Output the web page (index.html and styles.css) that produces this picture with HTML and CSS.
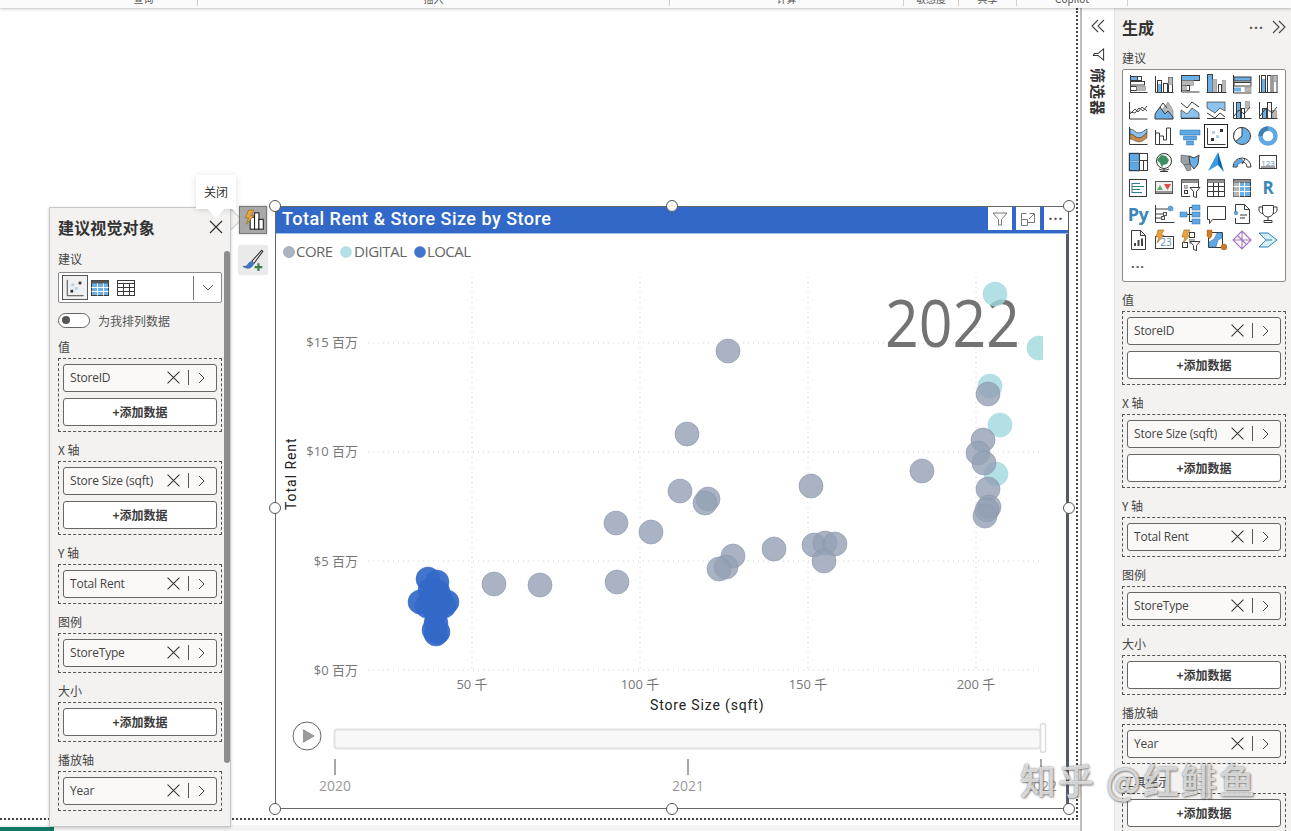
FILE: index.html
```html
<!DOCTYPE html>
<html lang="zh-CN">
<head>
<meta charset="utf-8">
<title>Power BI</title>
<link rel="stylesheet" href="styles.css">
</head>
<body>
<div class="app">
  <header class="ribbon">
    <span class="rib r1">查询</span><span class="rib r2">插入</span><span class="rib r3">计算</span><span class="rib r4">敏感度</span><span class="rib r5">共享</span><span class="rib r6">Copilot</span>
  </header>
  <div class="main">
    <section class="canvas">
      <div class="page"></div>
      <div class="tabs"><span class="tab"></span></div>

      <aside class="suggest">
        <div class="suggest-title"><h2>建议视觉对象</h2>
          <svg class="x-lg" viewBox="0 0 14 14"><path d="M1 1l12 12M13 1L1 13"/></svg>
        </div>
        <div class="lbl first">建议</div>
        <div class="picker">
          <span class="picked"><svg class="i s" viewBox="0 0 22 22"><path class="k" d="M2.5 2v17.500h18"/><rect class="d" x="15" y="4" width="3" height="3"/><rect class="d" x="6" y="13" width="3" height="3"/><rect class="lb" x="7" y="6" width="3" height="3"/><rect class="lb" x="11" y="10" width="3" height="3"/></svg></span>
          <svg class="i t1" viewBox="0 0 22 22"><rect class="bk" x="2.500" y="3.500" width="17" height="15"/><path class="h" d="M2.500 3.500h17v3h-17z"/><path class="wl" d="M2.500 10.500h17M2.500 14.500h17M8.500 6.500v12M14.500 6.500v12"/></svg>
          <svg class="i t2" viewBox="0 0 22 22"><rect class="k" x="2.500" y="3.500" width="17" height="15"/><path class="k" d="M2.500 6.500h17M2.500 10.500h17M2.500 14.500h17M8.500 6.500v12M14.500 6.500v12"/></svg>
          <span class="picker-end"><svg class="chev-d" viewBox="0 0 12 7"><path d="M1 1l5 5 5-5"/></svg></span>
        </div>
        <div class="toggle-row"><span class="toggle"><span class="knob"></span></span><span>为我排列数据</span></div>
        <div class="lbl">值</div>
        <div class="well"><div class="pill"><span class="nm">StoreID</span><svg class="x" viewBox="0 0 12 12"><path d="M.5.500l11 11M11.500.500l-11 11"/></svg><i class="bar"></i><svg class="gt" viewBox="0 0 7 12"><path d="M1 1l5 5-5 5"/></svg></div><div class="pill add">+添加数据</div></div>
        <div class="lbl">X 轴</div>
        <div class="well"><div class="pill"><span class="nm">Store Size (sqft)</span><svg class="x" viewBox="0 0 12 12"><path d="M.5.500l11 11M11.500.500l-11 11"/></svg><i class="bar"></i><svg class="gt" viewBox="0 0 7 12"><path d="M1 1l5 5-5 5"/></svg></div><div class="pill add">+添加数据</div></div>
        <div class="lbl">Y 轴</div>
        <div class="well"><div class="pill"><span class="nm">Total Rent</span><svg class="x" viewBox="0 0 12 12"><path d="M.5.500l11 11M11.500.500l-11 11"/></svg><i class="bar"></i><svg class="gt" viewBox="0 0 7 12"><path d="M1 1l5 5-5 5"/></svg></div></div>
        <div class="lbl">图例</div>
        <div class="well"><div class="pill"><span class="nm">StoreType</span><svg class="x" viewBox="0 0 12 12"><path d="M.5.500l11 11M11.500.500l-11 11"/></svg><i class="bar"></i><svg class="gt" viewBox="0 0 7 12"><path d="M1 1l5 5-5 5"/></svg></div></div>
        <div class="lbl">大小</div>
        <div class="well"><div class="pill add">+添加数据</div></div>
        <div class="lbl">播放轴</div>
        <div class="well"><div class="pill"><span class="nm">Year</span><svg class="x" viewBox="0 0 12 12"><path d="M.5.500l11 11M11.500.500l-11 11"/></svg><i class="bar"></i><svg class="gt" viewBox="0 0 7 12"><path d="M1 1l5 5-5 5"/></svg></div></div>
        <div class="scrollbar"></div>
      </aside>

      <span class="beak"></span>
      <div class="tooltip">关闭</div>
      <button class="side-btn on"><svg viewBox="0 0 22 22"><rect class="wd" x="7.500" y="7.500" width="4" height="11"/><rect class="wd" x="11.500" y="3.500" width="4" height="15"/><rect class="wd" x="15.500" y="9.500" width="4" height="9"/><path class="bolt" d="M6 1h5L8 6h3l-7 8 2-6H3z"/></svg></button>
      <button class="side-btn two"><svg viewBox="0 0 22 22"><path class="br" d="M2 17c3 0 4-1 5-3l3-2 2 2-2 3c-2 2-5 2-8 0z"/><path class="hd" d="M10 12L19 2l1 1-8 11"/><path class="pl" d="M16 14v7M12.500 17.500h7"/></svg></button>

      <article class="visual">
        <div class="vh"><span class="vt">Total Rent &amp; Store Size by Store</span>
          <span class="vb"><svg viewBox="0 0 16 16"><path d="M1 2h14l-5.500 6.500V14h-3V8.500z"/></svg></span>
          <span class="vb"><svg viewBox="0 0 16 16"><path d="M1.500 8.500V2.500h5M1.500 8.500h6v6h-6zM7.500 11.500h7v-5M9.500 2.500h5v4M14 3L9 8"/></svg></span>
          <span class="vb dots">···</span>
        </div>
        <svg class="plot" viewBox="276 234 790 574">
          <defs><clipPath id="cl"><rect x="276" y="234" width="767" height="450"/></clipPath></defs>
          <g class="lg">
            <circle class="cc" cx="289" cy="252" r="5.500"/><text x="296" y="257" textLength="37">CORE</text>
            <circle class="cd" cx="346" cy="252" r="5.500"/><text x="354" y="257" textLength="53">DIGITAL</text>
            <circle class="cl" cx="420" cy="252" r="5.500"/><text x="427" y="257" textLength="44">LOCAL</text>
          </g>
          <path class="grid" d="M368 343H1043M368 452H1043M368 561H1043M368 670H1043M472 277V670M640 277V670M808 277V670M976 277V670"/>
          <text class="big" x="885" y="347" textLength="135" lengthAdjust="spacingAndGlyphs">2022</text>
          <g class="ax">
            <text x="358" y="347">$15 百万</text><text x="358" y="456">$10 百万</text><text x="358" y="566">$5 百万</text><text x="358" y="675">$0 百万</text>
          </g>
          <g class="ax mid">
            <text x="472" y="689">50 千</text><text x="640" y="689">100 千</text><text x="808" y="689">150 千</text><text x="976" y="689">200 千</text>
          </g>
          <text class="axt" x="707" y="710" textLength="114">Store Size (sqft)</text>
          <text class="axt" transform="translate(296 474) rotate(-90)" textLength="72">Total Rent</text>
          <g clip-path="url(#cl)">
            <g class="cd">
              <circle cx="995" cy="294" r="12"/><circle cx="1039" cy="348" r="12"/><circle cx="990" cy="386" r="12"/><circle cx="1000" cy="425" r="12"/><circle cx="996" cy="474" r="12"/>
            </g>
            <g class="cc">
              <circle cx="728" cy="351" r="12"/><circle cx="687" cy="434" r="12"/><circle cx="680" cy="491" r="12"/><circle cx="708" cy="499" r="12"/><circle cx="705" cy="503" r="12"/><circle cx="616" cy="523" r="12"/><circle cx="651" cy="532" r="12"/><circle cx="811" cy="486" r="12"/><circle cx="922" cy="471" r="12"/><circle cx="733" cy="556" r="12"/><circle cx="774" cy="549" r="12"/><circle cx="814" cy="545" r="12"/><circle cx="825" cy="543" r="12"/><circle cx="835" cy="544" r="12"/><circle cx="824" cy="561" r="12"/><circle cx="726" cy="567" r="12"/><circle cx="719" cy="569" r="12"/><circle cx="617" cy="582" r="12"/><circle cx="540" cy="585" r="12"/><circle cx="494" cy="584" r="12"/><circle cx="983" cy="440" r="12"/><circle cx="978" cy="453" r="12"/><circle cx="984" cy="463" r="12"/><circle cx="988" cy="489" r="12"/><circle cx="989" cy="507" r="12"/><circle cx="987" cy="510" r="12"/><circle cx="985" cy="516" r="12"/><circle cx="988" cy="394" r="12"/>
            </g>
            <g class="cl">
              <circle cx="428" cy="579" r="12"/><circle cx="437" cy="582" r="12"/><circle cx="430" cy="590" r="12"/><circle cx="438" cy="592" r="12"/><circle cx="420" cy="602" r="12"/><circle cx="447" cy="602" r="12"/><circle cx="432" cy="600" r="12"/><circle cx="440" cy="598" r="12"/><circle cx="427" cy="606" r="12"/><circle cx="444" cy="606" r="12"/><circle cx="436" cy="612" r="12"/><circle cx="436" cy="623" r="12"/><circle cx="438" cy="632" r="12"/><circle cx="436" cy="634" r="12"/><circle cx="434" cy="630" r="12"/>
            </g>
          </g>
          <circle class="play" cx="307" cy="736" r="14"/><path class="tri" d="M303 729l12 7-12 7z"/>
          <rect class="track" x="334.500" y="729.500" width="706" height="19" rx="3"/>
          <rect class="thumb" x="1040.500" y="723.500" width="5" height="29" rx="2.500"/>
          <path class="tick" d="M335 759v16M688 759v16M1041 759v16"/>
          <g class="yr"><text x="335" y="791">2020</text><text x="688" y="791">2021</text><text x="1041" y="791">2022</text></g>
        </svg>
      </article>
      <span class="hd-p p1"></span><span class="hd-p p2"></span><span class="hd-p p3"></span><span class="hd-p p4"></span><span class="hd-p p5"></span><span class="hd-p p6"></span><span class="hd-p p7"></span><span class="hd-p p8"></span>
    </section>

    <aside class="filters">
      <svg class="dbl" viewBox="0 0 14 14"><path d="M7 1L1 7l6 6M13 1L7 7l6 6"/></svg>
      <svg class="fun" viewBox="0 0 14 14"><path d="M1 1.500h12L8 7.500v5l-2-1v-4z"/></svg>
      <div class="vtext">筛选器</div>
    </aside>

    <aside class="build">
      <div class="build-top"><h2>生成</h2><span class="more">···</span><svg class="dbl" viewBox="0 0 14 14"><path d="M1 1l6 6-6 6M7 1l6 6-6 6"/></svg></div>
      <div class="lbl sm">建议</div>
      <div class="gallery">
        <svg class="i" viewBox="0 0 22 22"><path class="k" d="M3.500 2v17.500h17"/><rect class="bk" x="3.500" y="3.500" width="7" height="4"/><rect class="k" x="10.500" y="3.500" width="4" height="4"/><rect class="k" x="3.500" y="8.500" width="14" height="3.500"/><rect class="k" x="3.500" y="13.500" width="6" height="4"/><rect class="gr" x="9.500" y="13.500" width="9" height="4"/></svg>
        <svg class="i" viewBox="0 0 22 22"><path class="k" d="M2.500 3v16.500h18"/><rect class="k" x="4.500" y="7.500" width="4" height="12"/><rect class="b" x="5" y="11" width="3" height="8"/><rect class="k" x="10.500" y="10.500" width="4" height="9"/><rect class="k" x="15.500" y="4.500" width="4" height="15"/><rect class="gr" x="15.500" y="4.500" width="4" height="7"/></svg>
        <svg class="i" viewBox="0 0 22 22"><rect class="bk" x="2.500" y="2.500" width="18" height="5"/><rect class="gr" x="2.500" y="7.500" width="12" height="5"/><rect class="k" x="2.500" y="12.500" width="8" height="5"/><rect class="gr" x="2.500" y="12.500" width="5" height="5"/><path class="k" d="M2.500 2v17h18"/></svg>
        <svg class="i" viewBox="0 0 22 22"><rect class="bk" x="2.500" y="1.500" width="5" height="18"/><rect class="gr" x="7.500" y="6.500" width="4" height="13"/><rect class="k" x="13.500" y="11.500" width="3" height="8"/><rect class="gr" x="17.500" y="7.500" width="3" height="12"/><path class="k" d="M1.500 19.500h20"/></svg>
        <svg class="i" viewBox="0 0 22 22"><path class="k" d="M2.500 2v18h18"/><rect class="b" x="3" y="4" width="17" height="4"/><rect class="k" x="3" y="4" width="17" height="4"/><rect class="k" x="3" y="9.500" width="17" height="3.500"/><rect class="b" x="3" y="14.500" width="7" height="4"/><rect class="gr" x="14" y="14.500" width="6" height="4"/></svg>
        <svg class="i" viewBox="0 0 22 22"><path class="k" d="M1.500 19.500h19M2.500 2v17"/><rect class="k" x="4.500" y="2.500" width="4" height="17"/><rect class="b" x="5" y="6" width="3" height="13"/><rect class="k" x="10.500" y="2.500" width="3.500" height="17"/><rect class="k" x="16" y="2.500" width="4" height="17"/><rect class="gr" x="16" y="2.500" width="4" height="6"/></svg>

        <svg class="i" viewBox="0 0 22 22"><path class="k" d="M2.500 3v17h18"/><path class="lk" d="M3 15l5-5 3 3 4-5 5 4M3 13l5 1 4-5 4 3 4-5"/></svg>
        <svg class="i" viewBox="0 0 22 22"><path class="gr" d="M9 11l6-8 5 8v9h-9z"/><path class="bk" d="M2 20v-5l5-7 5 7 3-3 5 6v2z"/><path class="k" d="M7 8l3-4 4 5"/></svg>
        <svg class="i" viewBox="0 0 22 22"><path class="bl" d="M2 11l6 4 5-6 7 5v5H2z"/><path class="k" d="M2 4l6 5 5-6 7 5"/><path class="k" d="M2 19.500h19"/></svg>
        <svg class="i" viewBox="0 0 22 22"><path class="bl" d="M2 3h18v9l-5-3-5 5-8-5z"/><path class="k" d="M2 14l8 5 5-5 5 4M2 19.500h18"/></svg>
        <svg class="i" viewBox="0 0 22 22"><rect class="bk" x="5.500" y="3.500" width="4" height="16"/><rect class="k" x="10.500" y="9.500" width="3" height="10"/><rect class="gr" x="14.500" y="2.500" width="4" height="7"/><path class="k" d="M2.500 3v16.500h18M3 17l5-6 5 4 6-7"/></svg>
        <svg class="i" viewBox="0 0 22 22"><rect class="bk" x="5.500" y="9.500" width="4" height="10"/><rect class="k" x="10.500" y="3.500" width="4" height="16"/><rect class="gr" x="15.500" y="11.500" width="4" height="8"/><path class="k" d="M2.500 3v16.500h18M3 17l6-8 6 5 5-6"/></svg>

        <svg class="i" viewBox="0 0 22 22"><path class="bl" d="M3 4c4 0 5 4 9 4s5-3 8-4v4c-3 1-4 5-8 5S7 9 3 9z"/><path class="or" d="M3 9c4 0 5 4 9 4s5-4 8-5v5c-3 1-4 4-8 4s-5-3-9-3z"/><path class="k" d="M2.500 2v17.500h18"/></svg>
        <svg class="i" viewBox="0 0 22 22"><path class="k" d="M2.500 5v14.500h18M2.500 8h4v11.500M6.500 19.500V11h4v4h3V3h4v16.500"/></svg>
        <svg class="i" viewBox="0 0 22 22"><path class="bn" d="M1 5h20v5H1z"/><path class="bn" d="M4.500 11h13v4h-13zM7.500 16h7v4h-7z"/></svg>
        <span class="sel"><svg class="i" viewBox="0 0 22 22"><path class="k" d="M2.500 3v16.500h18"/><rect class="d" x="15" y="4" width="3" height="3"/><rect class="d" x="6" y="13" width="3" height="3"/><rect class="lb" x="7" y="6" width="3" height="3"/><rect class="lb" x="11" y="10" width="3" height="3"/></svg></span>
        <svg class="i" viewBox="0 0 22 22"><circle class="bk" cx="11" cy="11" r="8.500"/><path class="wf" d="M11 11V2.500A8.500 8.500 0 0 0 4.500 16.500z"/></svg>
        <svg class="i" viewBox="0 0 22 22"><circle class="dn" cx="11" cy="11" r="7.500"/><path class="dn2" d="M11 3.500a7.500 7.500 0 0 0-7.500 7.500"/></svg>

        <svg class="i" viewBox="0 0 22 22"><rect class="bn" x="2" y="2" width="10" height="8"/><rect class="bn" x="2" y="11" width="10" height="9"/><rect class="k" x="2.500" y="2.500" width="18" height="17"/><path class="k" d="M12.500 2.500v17M12.500 9.500h8M16.500 9.500v10"/></svg>
        <svg class="i" viewBox="0 0 22 22"><circle class="gl" cx="11" cy="10" r="7.500"/><path class="gn" d="M8 4l5 1 3 4-2 4-4 1-1 3-2-5-3-3z"/><path class="k" d="M6 18c3 1.500 7 1.500 10 0M11 18v2M7 20.500h8"/></svg>
        <svg class="i" viewBox="0 0 22 22"><path class="gr2" d="M2 4l8 1 1 8-6 1-3-3z"/><path class="bk" d="M10 5l5 2 5-3-1 9-4 5-4-5z"/><path class="gr2" d="M5 14l6-1 1 6-4 1z"/></svg>
        <svg class="i" viewBox="0 0 22 22"><path class="ar1" d="M13 1L3 20l10-6z"/><path class="ar2" d="M13 1l6 20-6-7z"/></svg>
        <svg class="i" viewBox="0 0 22 22"><path class="k" d="M2 16a9 9 0 0 1 18 0h-4a5 5 0 0 0-10 0z"/><path class="bn" d="M3 15.500a8 8 0 0 1 8-7.500l1 3-1 1a4 4 0 0 0-5 3.500z"/><path class="lkd" d="M11 13l3-5"/></svg>
        <span class="card-i"><svg class="i" viewBox="0 0 22 22"><rect class="k" x="2.500" y="4.500" width="17" height="13"/><text class="n123" x="11" y="14.500">123</text><path class="k" d="M4 16h14"/></svg></span>

        <svg class="i" viewBox="0 0 22 22"><rect class="k" x="2.500" y="2.500" width="17" height="17"/><path class="tl" d="M5 6.500h8M5 9.500h12M5 12.500h8M5 15.500h10M5 6v10"/></svg>
        <svg class="i" viewBox="0 0 22 22"><rect class="kg" x="2.500" y="4.500" width="17" height="12"/><path class="tg" d="M4 13l3-5 3 5z"/><path class="tr" d="M11 7h7l-3.500 6z"/><path class="k" d="M3 15h16"/></svg>
        <svg class="i" viewBox="0 0 22 22"><path class="k" d="M11 19.500H2.500v-17h17v8"/><path class="gs" d="M2.500 2.500h17v3h-17z"/><rect class="gr" x="5.500" y="8.500" width="3" height="3"/><rect class="k" x="5.500" y="13.500" width="3" height="3"/><path class="w" d="M11 10.500h10l-3.500 4v6l-3-1v-5z"/></svg>
        <svg class="i" viewBox="0 0 22 22"><rect class="k" x="2.500" y="2.500" width="17" height="17"/><path class="gs" d="M2.500 2.500h17v3h-17z"/><path class="k" d="M2.500 9.500h17M2.500 14.500h17M8.500 5.500v14M13.500 5.500v14"/></svg>
        <svg class="i" viewBox="0 0 22 22"><rect class="bk" x="2.500" y="2.500" width="17" height="17"/><path class="gs" d="M2.500 2.500h17v3h-17z"/><rect class="gr" x="2.500" y="5.500" width="6" height="14"/><path class="wl" d="M2.500 9.500h17M2.500 14.500h17M8.500 5.500v14M13.500 5.500v14"/></svg>
        <span class="txt-i r">R</span>

        <span class="txt-i py">Py</span>
        <svg class="i" viewBox="0 0 22 22"><path class="k" d="M2.500 2v17.500h19M3 6h12M3 11h7M3 15h5"/><circle class="bn" cx="17.500" cy="5.500" r="2.500"/><rect class="kg" x="10.500" y="9.500" width="3" height="3"/><rect class="kg" x="8.500" y="13.500" width="3" height="3"/></svg>
        <svg class="i" viewBox="0 0 22 22"><rect class="bn" x="1" y="9" width="7" height="5"/><rect class="bn" x="13" y="2" width="8" height="5"/><rect class="bn" x="13" y="9" width="8" height="5"/><rect class="bn" x="13" y="16" width="8" height="5"/><path class="k" d="M8 11.500h5M10.500 4.500v14M10.500 4.500H13M10.500 18.500H13"/></svg>
        <svg class="i" viewBox="0 0 22 22"><path class="k" d="M2.500 3.500h18v13h-13l-3 4v-4h-2z"/></svg>
        <svg class="i" viewBox="0 0 22 22"><path class="k" d="M4.500 10V1.500h9l5 5v14h-14V15M13.500 1.500v5h5M9 12h7M9 15h5"/><circle class="bn" cx="5" cy="10" r="1.800"/></svg>
        <svg class="i" viewBox="0 0 22 22"><path class="k" d="M5.500 2.500h11v6a5.500 5.500 0 0 1-11 0zM5.500 4H2v3c0 2 2 3.500 4 3.500M16.500 4H20v3c0 2-2 3.500-4 3.500M11 14v3M7 19.500h8v-2H7z"/></svg>

        <svg class="i" viewBox="0 0 22 22"><path class="k" d="M4.500 1.500h9l5 5v14h-14zM13.500 1.500v5h5"/><path class="dk" d="M7 17h2v-3H7zM10.500 17h2v-6h-2zM14 17h2V9.500h-2z"/></svg>
        <svg class="i" viewBox="0 0 22 22"><rect class="k" x="2.500" y="7.500" width="18" height="12"/><text class="n123 big-n" x="13" y="17">23</text><path class="bolt" d="M5 1h6L8 6h3l-7 8 2-6H3z"/></svg>
        <svg class="i" viewBox="0 0 22 22"><rect class="k" x="10.500" y="3.500" width="5" height="5"/><rect class="k" x="3.500" y="13.500" width="5" height="5"/><rect class="gr" x="10.500" y="10.500" width="5" height="4"/><path class="w" d="M11 12.500h10l-3.500 4v5l-3-1v-4z"/><path class="bolt" d="M5 1h6L8 6h3l-7 8 2-6H3z"/></svg>
        <svg class="i" viewBox="0 0 22 22"><path class="k" d="M3.500 3.500h14v15h-14z"/><path class="bn" d="M4 18V13l5-3 3-6h5v5l-4 2-2 7z"/><path class="orf" d="M2 1h5v6L4.500 10 2 7z"/><circle class="orf" cx="19" cy="18" r="3"/></svg>
        <svg class="i" viewBox="0 0 22 22"><path class="pu" d="M11 2l9 9-9 9-9-9zM11 2v18M2 11h18M6.500 6.500l9 9"/></svg>
        <svg class="i" viewBox="0 0 22 22"><path class="pa" d="M2 4h9l9 7-9 7H2l7-7zM9 11h6"/></svg>

        <span class="gal-more">···</span>
      </div>
      <div class="lbl">值</div>
      <div class="well"><div class="pill"><span class="nm">StoreID</span><svg class="x" viewBox="0 0 12 12"><path d="M.5.500l11 11M11.500.500l-11 11"/></svg><i class="bar"></i><svg class="gt" viewBox="0 0 7 12"><path d="M1 1l5 5-5 5"/></svg></div><div class="pill add">+添加数据</div></div>
      <div class="lbl">X 轴</div>
      <div class="well"><div class="pill"><span class="nm">Store Size (sqft)</span><svg class="x" viewBox="0 0 12 12"><path d="M.5.500l11 11M11.500.500l-11 11"/></svg><i class="bar"></i><svg class="gt" viewBox="0 0 7 12"><path d="M1 1l5 5-5 5"/></svg></div><div class="pill add">+添加数据</div></div>
      <div class="lbl">Y 轴</div>
      <div class="well"><div class="pill"><span class="nm">Total Rent</span><svg class="x" viewBox="0 0 12 12"><path d="M.5.500l11 11M11.500.500l-11 11"/></svg><i class="bar"></i><svg class="gt" viewBox="0 0 7 12"><path d="M1 1l5 5-5 5"/></svg></div></div>
      <div class="lbl">图例</div>
      <div class="well"><div class="pill"><span class="nm">StoreType</span><svg class="x" viewBox="0 0 12 12"><path d="M.5.500l11 11M11.500.500l-11 11"/></svg><i class="bar"></i><svg class="gt" viewBox="0 0 7 12"><path d="M1 1l5 5-5 5"/></svg></div></div>
      <div class="lbl">大小</div>
      <div class="well"><div class="pill add">+添加数据</div></div>
      <div class="lbl">播放轴</div>
      <div class="well"><div class="pill"><span class="nm">Year</span><svg class="x" viewBox="0 0 12 12"><path d="M.5.500l11 11M11.500.500l-11 11"/></svg><i class="bar"></i><svg class="gt" viewBox="0 0 7 12"><path d="M1 1l5 5-5 5"/></svg></div></div>
      <div class="lbl">工具提示</div>
      <div class="well"><div class="pill add">+添加数据</div></div>
    </aside>
  </div>
  <div class="watermark">知乎 @红鲱鱼</div>
</div>
</body>
</html>
```
FILE: styles.css
```css
*{box-sizing:border-box}
html,body{margin:0;height:100%;overflow:hidden;background:#fff}
body{font-family:"Open Sans","Noto Sans CJK SC",sans-serif;color:#444;font-size:12px}
svg{display:block}
h2{margin:0;font-size:16px;font-weight:700;color:#333;font-family:"Noto Sans CJK SC",sans-serif}
.app{position:relative;width:1291px;height:831px;display:flex;flex-direction:column;overflow:hidden}

.ribbon{position:relative;height:8px;flex:none;background:#fbfbfb;box-shadow:0 1px 3px rgba(0,0,0,.25);z-index:3;overflow:hidden}
.rib{position:absolute;top:-8px;height:14px;line-height:14px;font-size:10px;color:#555;text-align:center;border-right:1px solid #d0d0d0;font-family:"Noto Sans CJK SC",sans-serif}
.r1{left:90px;width:108px}.r2{left:198px;width:472px}.r3{left:670px;width:234px}.r4{left:904px;width:55px}.r5{left:959px;width:58px}.r6{left:1017px;width:111px}

.main{flex:1;display:flex;min-height:0}
.canvas{position:relative;width:1082px;flex:none;background:#fff;border-right:2px solid #bdbdbd;display:flex;flex-direction:column}
.page{flex:1;margin-right:2px;border-right:2px dotted #444;border-bottom:2px dotted #444}
.tabs{height:11px;flex:none;position:relative;background:#fff}
.tabs::after{content:"";position:absolute;left:0;right:0;bottom:0;height:6px;background:#f3f3f3}
.tab{position:absolute;left:0;bottom:0;width:54px;height:4px;background:#117865;z-index:1}

.suggest{position:absolute;left:49px;top:199px;width:182px;height:620px;background:#f3f2f1;border:1px solid #c8c8c8;box-shadow:0 1px 3px rgba(0,0,0,.2);padding:0 8px;z-index:2}
.suggest-title{display:flex;align-items:center;justify-content:space-between;height:38px}
.suggest-title h2{letter-spacing:.15px}
.x-lg{width:14px;height:14px;margin-right:-1px}
.x-lg path{fill:none;stroke:#333;stroke-width:1.2}
.lbl{height:19.5px;line-height:16px;font-size:12px;color:#444;font-family:"Noto Sans CJK SC",sans-serif;margin-top:10px}
.lbl.first{margin-top:4px;height:22px;line-height:18px}
.lbl.sm{margin-top:0;height:23px;line-height:24px}
.picker{height:31px;background:#fff;border:1px solid #8a8a8a;border-radius:2px;display:flex;align-items:center;padding-left:3px}
.picked{width:26px;height:25px;border:1px solid #555;background:#f0f0f0;display:flex;align-items:center;justify-content:center}
.i{width:22px;height:22px}
.t1{margin-left:1px}
.t2{margin-left:4px}
.picker-end{margin-left:auto;width:28px;height:24px;border-left:1px solid #777;display:flex;align-items:center;justify-content:center}
.chev-d{width:12px;height:7px}
.chev-d path{fill:none;stroke:#666}
.toggle-row{display:flex;align-items:center;gap:8px;height:16px;margin-top:9px;color:#555;font-family:"Noto Sans CJK SC",sans-serif;font-size:12px}
.toggle{width:32px;height:15px;border:1px solid #666;border-radius:8px;background:#fff;display:flex;align-items:center;padding-left:3px}
.knob{width:8px;height:8px;border-radius:50%;background:#555}
.toggle-row + .lbl{margin-top:11px;height:19px}

.well{border:1px dashed #555;border-radius:1px;padding:4.5px 4px;display:flex;flex-direction:column;gap:5.5px}
.pill{height:28.5px;border:1px solid #666;border-radius:3px;background:#faf9f8;display:flex;align-items:center;padding:0 11px 0 6px;font-size:12px;color:#444}
.pill .nm{flex:1;white-space:nowrap;letter-spacing:-.2px}
.x{width:13px;height:13px;margin-right:8px}
.x path{fill:none;stroke:#333;stroke-width:.95}
.bar{width:1px;height:15px;background:#555;margin-right:9px}
.gt{width:7px;height:12px}
.gt path{fill:none;stroke:#444}
.add{justify-content:center;background:#fff;font-weight:700;font-size:12px;color:#3a3a3a;padding:0;font-family:"Noto Sans CJK SC",sans-serif}
.scrollbar{position:absolute;right:0;top:43px;width:6px;height:512px;background:#8c8c8c;border-radius:3px}

.beak{position:absolute;left:224px;top:204px;width:15px;height:15px;background:#f3f2f1;border:1px solid #c8c8c8;transform:rotate(45deg);z-index:1}
.tooltip{position:absolute;left:196px;top:167px;width:40px;height:34px;line-height:34px;text-align:center;background:#fff;font-size:12px;color:#333;box-shadow:0 1px 6px rgba(0,0,0,.14);font-family:"Noto Sans CJK SC",sans-serif;z-index:4}
.tooltip::after{content:"";position:absolute;left:14px;bottom:-6px;width:12px;height:12px;background:#fff;transform:rotate(45deg)}
.side-btn{position:absolute;left:239px;width:28px;height:28px;padding:2px;border:0;background:#eaeaea;box-shadow:0 0 2px rgba(0,0,0,.25);z-index:3}
.side-btn.on{top:198px;background:#a8a8a8;border:1px solid #777}
.side-btn.two{top:238px}
.side-btn svg{width:24px;height:24px}
.wd{fill:#fff;stroke:#222}
.bolt{fill:#e8a33d;stroke:#9a6a1d;stroke-width:.6}
.br{fill:#3f78c8;stroke:#2a4e86;stroke-width:.6}
.hd{fill:none;stroke:#333}
.pl{fill:none;stroke:#3d7f4f;stroke-width:2}

.visual{position:absolute;left:275px;top:198px;width:794px;height:603px;background:#fff;border-left:1px solid #666;border-bottom:1px solid #666;border-top:1px solid #666;border-right:3px solid #555a6a;z-index:1}
.vh{height:27px;background:#3268c8;display:flex;align-items:flex-start;padding-left:6px;gap:4px;border-bottom:1px solid #9fc1ea;margin-right:-2px}
.vt{flex:1;font:500 18px/24px Roboto,sans-serif;color:#fff;letter-spacing:.48px;white-space:nowrap}
.vb{width:24px;height:23px;background:#fff;display:flex;align-items:center;justify-content:center;flex:none}
.vb svg{width:16px;height:16px}
.vb path{fill:none;stroke:#777}
.vb.dots{font-size:14px;color:#555;font-weight:700;letter-spacing:1px}
.plot{width:790px;height:574px}
.plot text{font-family:"Open Sans","Noto Sans CJK SC",sans-serif}
.lg text{font-size:15px;fill:#666}
.grid{stroke:#cfcfcf;stroke-dasharray:1 4;fill:none}
.plot .big{font-size:65px;fill:#737373}
.ax text{font-size:13px;fill:#777;text-anchor:end}
.ax.mid text{text-anchor:middle}
.plot .axt{font:400 14px Roboto,sans-serif;fill:#222;text-anchor:middle;letter-spacing:.4px}
.cc{fill:#94a0b4;fill-opacity:.8;stroke:#8a96ab;stroke-opacity:.6}
.cd{fill:#a0d8dd;fill-opacity:.8;stroke:#a0d8dd;stroke-opacity:.5}
.cl{fill:#3268c8;fill-opacity:.92;stroke:#3268c8;stroke-opacity:.5}
.play{fill:#fff;stroke:#666}
.tri{fill:#9a9a9a}
.track{fill:#f8f8f8;stroke:#e2e2e2;stroke-width:2}
.thumb{fill:#fff;stroke:#ddd;stroke-width:1.5}
.tick{stroke:#a8a8a8;stroke-width:2;fill:none}
.yr text{font-size:14px;fill:#9a9a9a;text-anchor:middle}

.hd-p{position:absolute;width:12px;height:12px;border-radius:50%;background:#fff;border:1px solid #555;z-index:2}
.p1{left:269px;top:192px}.p2{left:666px;top:192px}.p3{left:1063px;top:192px}
.p4{left:269px;top:494px}.p5{left:1063px;top:494px}
.p6{left:269px;top:795px}.p7{left:666px;top:795px}.p8{left:1063px;top:795px}

.filters{width:32px;flex:none;background:#fff;display:flex;flex-direction:column;align-items:center;padding-top:11px;color:#333}
.dbl{width:14px;height:14px;flex:none}
.dbl path{fill:none;stroke:#444;stroke-width:1.1}
.fun{width:13px;height:13px;margin-top:15px;transform:rotate(90deg)}
.fun path{fill:none;stroke:#333;stroke-width:1.1}
.vtext{writing-mode:vertical-rl;text-orientation:sideways;font:700 15px/16px "Noto Sans CJK SC",sans-serif;color:#333;margin-top:7px;letter-spacing:1px}

.build{flex:1;background:#f3f2f1;border-left:1px solid #e3e3e3;padding:0 5px 0 7px;overflow:hidden}
.build-top{height:38px;display:flex;align-items:center;gap:8px}
.build-top h2{flex:1}
.more{font-size:14px;font-weight:700;color:#555;letter-spacing:1px}
.gallery{height:213px;background:#fff;border:1px solid #8a8a8a;border-radius:2px;display:grid;grid-template-columns:repeat(6,26px);grid-auto-rows:26px;padding:1px 0 0 2px;margin-bottom:9.5px;justify-items:center;align-items:center}
.gallery + .lbl{margin-top:0}
.sel{width:24px;height:24px;border:1px solid #222;display:flex;align-items:center;justify-content:center}
.card-i{display:block}
.txt-i{font:700 17px/22px "Open Sans",sans-serif;color:#3b88b8;text-align:center}
.txt-i.py{font-size:18px;letter-spacing:-.5px}
.gal-more{font-size:13px;font-weight:700;color:#555;letter-spacing:1px}

.k{fill:none;stroke:#3a3a3a}
.b{fill:#6cb0e8}
.bl{fill:#8cc3ee;stroke:#3a3a3a;stroke-width:.7}
.bn{fill:#5ea8e4;stroke:#2f6ea5;stroke-width:.5}
.bk{fill:#6cb0e8;stroke:#3a3a3a}
.gr{fill:#b8b8b8;stroke:#7a7a7a;stroke-width:.5}
.gr2{fill:#9aa0a8;stroke:#555;stroke-width:.6}
.lk{fill:none;stroke:#3a3a3a;stroke-width:.9}
.lkd{stroke:#333;fill:none}
.d{fill:#333}
.lb{fill:#b4d0e4}
.h{fill:#555}
.gs{fill:#8f8f8f;stroke:#444;stroke-width:.5}
.wl{fill:none;stroke:#fff}
.wf{fill:#fff;stroke:#3a3a3a}
.or{fill:#c98a4b;stroke:#3a3a3a;stroke-width:.5}
.orf{fill:#d07a25;stroke:#9a5a1c;stroke-width:.4}
.dn{fill:none;stroke:#5ea8e4;stroke-width:4.5}
.dn2{fill:none;stroke:#3d80b8;stroke-width:4.5}
.gl{fill:#fff;stroke:#333}
.gn{fill:#3e8f5f}
.ar1{fill:#3a9be0}
.ar2{fill:#0f66b0}
.n123{font-size:8px;fill:#5c8fb8;text-anchor:middle;font-family:"Open Sans",sans-serif}
.big-n{font-size:10px}
.tl{fill:none;stroke:#2a7f8f}
.kg{fill:#f0f0f0;stroke:#555}
.tg{fill:#58b06d}
.tr{fill:#dc4c4c}
.w{fill:#fff;stroke:#3a3a3a}
.dk{fill:#444}
.pu{fill:none;stroke:#a670c0;stroke-width:1.1}
.pa{fill:#d6edfa;stroke:#2f7fae}
.s{width:20px;height:20px}

.watermark{position:absolute;left:1020px;top:756px;font:500 36px/46px "Noto Sans CJK SC",sans-serif;letter-spacing:2px;color:rgba(255,255,255,.72);text-shadow:0 0 2px rgba(70,70,70,.75),1px 1px 2px rgba(70,70,70,.5);white-space:nowrap;z-index:5}
```
